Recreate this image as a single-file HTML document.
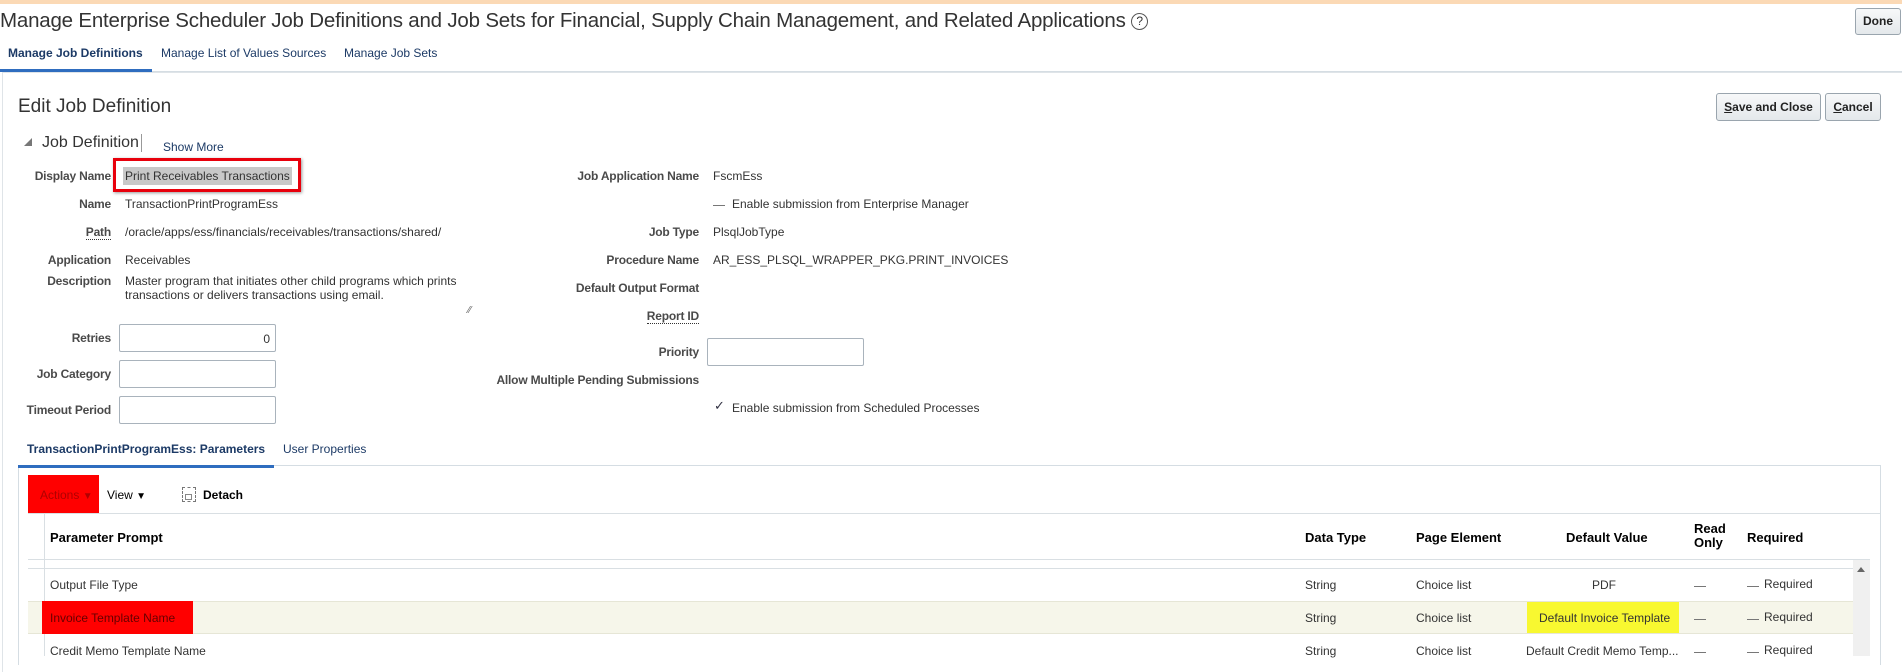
<!DOCTYPE html>
<html><head><meta charset="utf-8"><style>
*{margin:0;padding:0;box-sizing:border-box}
body{width:1902px;height:656px;overflow:hidden;background:#fff;font-family:"Liberation Sans",Arial,sans-serif;color:#333;font-size:12px;position:relative}
.a{position:absolute;white-space:nowrap}
.lbl{position:absolute;text-align:right;color:#4a4a4a;white-space:nowrap;font-weight:bold;letter-spacing:-0.2px}
.btn{position:absolute;border:1px solid #9aa5ae;border-radius:3px;background:linear-gradient(#f7f8f9,#e4e8eb);font-weight:bold;color:#222;font-size:12px;text-align:center}
.inp{position:absolute;border:1px solid #a9b3bc;border-radius:2px;background:#fff}
.hl{position:absolute;height:1px;background:#d9dfe3}
.b{font-weight:bold;color:#000}
</style></head><body>
<div class="a" style="left:0;top:0;width:1902px;height:4px;background:#fbd9b5"></div>
<div class="a" style="left:0;top:9px;font-size:20.5px;color:#333;letter-spacing:-0.2px">Manage Enterprise Scheduler Job Definitions and Job Sets for Financial, Supply Chain Management, and Related Applications <span style="display:inline-block;width:17px;height:17px;border:1.5px solid #555;border-radius:50%;font-size:12px;line-height:14px;text-align:center;vertical-align:2px">?</span></div>
<div class="btn" style="left:1855px;top:8px;width:46px;height:27px;line-height:25px">Done</div>
<div class="a b" style="left:8px;top:46px;font-size:12px;color:#1c3a66">Manage Job Definitions</div>
<div class="a" style="left:161px;top:46px;font-size:12px;color:#1c3a66">Manage List of Values Sources</div>
<div class="a" style="left:344px;top:46px;font-size:12px;color:#1c3a66">Manage Job Sets</div>
<div class="hl" style="left:0;top:71px;width:1902px;height:1px;background:#d5dde3"></div>
<div class="a" style="left:0;top:69px;width:152px;height:3px;background:#2f6dbf"></div>
<div class="a" style="left:2px;top:72px;width:1902px;height:600px;border:1px solid #dfe4e8;border-bottom:none"></div>
<div class="a" style="left:18px;top:96px;font-size:19px;color:#333">Edit Job Definition</div>
<div class="btn" style="left:1716px;top:93px;width:105px;height:28px;line-height:26px"><u>S</u>ave and Close</div>
<div class="btn" style="left:1825px;top:93px;width:56px;height:28px;line-height:26px"><u>C</u>ancel</div>
<div class="a" style="left:24px;top:138px;width:0;height:0;border-left:8px solid transparent;border-bottom:8px solid #777"></div>
<div class="a" style="left:42px;top:134px;font-size:16px;color:#333">Job Definition</div>
<div class="a" style="left:141px;top:134px;width:1px;height:18px;background:#999"></div>
<div class="a" style="left:163px;top:140px;font-size:12px;color:#1c3a66">Show More</div>

<div class="lbl" style="right:1791px;top:169px">Display Name</div>
<div class="a" style="left:113px;top:158px;width:188px;height:34px;border:3px solid #e8000c;box-shadow:1px 1px 3px #999"></div>
<div class="a" style="left:123px;top:167px;height:18px;background:#c8c8c8;padding:2px 2px;line-height:14px">Print Receivables Transactions</div>
<div class="lbl" style="right:1791px;top:197px">Name</div>
<div class="a" style="left:125px;top:197px">TransactionPrintProgramEss</div>
<div class="lbl" style="right:1791px;top:225px;border-bottom:1px dotted #333">Path</div>
<div class="a" style="left:125px;top:225px">/oracle/apps/ess/financials/receivables/transactions/shared/</div>
<div class="lbl" style="right:1791px;top:253px">Application</div>
<div class="a" style="left:125px;top:253px">Receivables</div>
<div class="lbl" style="right:1791px;top:274px">Description</div>
<div class="a" style="left:125px;top:274px;line-height:14px">Master program that initiates other child programs which prints<br>transactions or delivers transactions using email.</div>
<div class="a" style="left:468px;top:305px;font-size:10px;color:#666">⁄⁄</div>
<div class="lbl" style="right:1791px;top:331px">Retries</div>
<div class="inp" style="left:119px;top:324px;width:157px;height:28px"><span style="position:absolute;right:5px;top:7px">0</span></div>
<div class="lbl" style="right:1791px;top:367px">Job Category</div>
<div class="inp" style="left:119px;top:360px;width:157px;height:28px"></div>
<div class="lbl" style="right:1791px;top:403px">Timeout Period</div>
<div class="inp" style="left:119px;top:396px;width:157px;height:28px"></div>

<div class="lbl" style="right:1203px;top:169px">Job Application Name</div>
<div class="a" style="left:713px;top:169px">FscmEss</div>
<div class="a" style="left:713px;top:205px;width:12px;height:1px;background:#777"></div>
<div class="a" style="left:732px;top:197px">Enable submission from Enterprise Manager</div>
<div class="lbl" style="right:1203px;top:225px">Job Type</div>
<div class="a" style="left:713px;top:225px">PlsqlJobType</div>
<div class="lbl" style="right:1203px;top:253px">Procedure Name</div>
<div class="a" style="left:713px;top:253px">AR_ESS_PLSQL_WRAPPER_PKG.PRINT_INVOICES</div>
<div class="lbl" style="right:1203px;top:281px">Default Output Format</div>
<div class="lbl" style="right:1203px;top:309px;border-bottom:1px dotted #333">Report ID</div>
<div class="lbl" style="right:1203px;top:345px">Priority</div>
<div class="inp" style="left:707px;top:338px;width:157px;height:28px"></div>
<div class="lbl" style="right:1203px;top:373px">Allow Multiple Pending Submissions</div>
<div class="a" style="left:714px;top:398px;color:#334;font-size:13px">✓</div>
<div class="a" style="left:732px;top:401px">Enable submission from Scheduled Processes</div>

<div class="a b" style="left:27px;top:442px;color:#1c3a66">TransactionPrintProgramEss: Parameters</div>
<div class="a" style="left:283px;top:442px;color:#1c3a66">User Properties</div>
<div class="a" style="left:18px;top:465px;width:1863px;height:200px;border:1px solid #d5dde3;border-bottom:none"></div>
<div class="a" style="left:18px;top:465px;width:256px;height:3px;background:#2f6dbf"></div>
<div class="a" style="left:28px;top:475px;width:71px;height:39px;background:#ff0000"></div>
<div class="a" style="left:40px;top:488px;color:#b00000">Actions <span style="font-size:10px">▼</span></div>
<div class="a" style="left:107px;top:488px;color:#000">View <span style="font-size:10px">▼</span></div>
<div class="a" style="left:182px;top:487px;width:14px;height:15px;border:1px dashed #777"></div>
<div class="a" style="left:185px;top:494px;width:7px;height:6px;border:1px solid #888"></div>
<div class="a" style="left:203px;top:488px;color:#000;font-weight:bold">Detach</div>
<div class="hl" style="left:28px;top:513px;width:1852px"></div>
<div class="a" style="left:44px;top:513px;width:1px;height:143px;background:#d9dfe3"></div>
<div class="a b" style="left:50px;top:530px;font-size:13px">Parameter Prompt</div>
<div class="a b" style="left:1305px;top:530px;font-size:13px">Data Type</div>
<div class="a b" style="left:1416px;top:530px;font-size:13px">Page Element</div>
<div class="a b" style="left:1566px;top:530px;font-size:13px">Default Value</div>
<div class="a b" style="left:1694px;top:522px;font-size:13px;line-height:14px">Read<br>Only</div>
<div class="a b" style="left:1747px;top:530px;font-size:13px">Required</div>
<div class="hl" style="left:28px;top:559px;width:1842px"></div>
<div class="hl" style="left:28px;top:568px;width:1825px"></div>
<div class="a" style="left:1853px;top:560px;width:17px;height:96px;background:#f0f0f0"></div>
<div class="a" style="left:1857px;top:567px;width:0;height:0;border-left:4px solid transparent;border-right:4px solid transparent;border-bottom:5px solid #666"></div>
<div class="a" style="left:50px;top:578px">Output File Type</div>
<div class="a" style="left:1305px;top:578px">String</div>
<div class="a" style="left:1416px;top:578px">Choice list</div>
<div class="a" style="left:1592px;top:578px">PDF</div>
<div class="a" style="left:1694px;top:586px;width:12px;height:1px;background:#777"></div>
<div class="a" style="left:1747px;top:586px;width:12px;height:1px;background:#777"></div>
<div class="a" style="left:1764px;top:577px">Required</div>
<div class="a" style="left:28px;top:601px;width:1825px;height:33px;background:#f6f6ea;border-top:1px solid #e6e6d6;border-bottom:1px solid #e6e6d6"></div>
<div class="a" style="left:42px;top:601px;width:151px;height:33px;background:#ff0000"></div>
<div class="a" style="left:50px;top:611px;color:#600">Invoice Template Name</div>
<div class="a" style="left:1305px;top:611px">String</div>
<div class="a" style="left:1416px;top:611px">Choice list</div>
<div class="a" style="left:1527px;top:602px;width:152px;height:31px;background:#f8f830"></div>
<div class="a" style="left:1539px;top:611px">Default Invoice Template</div>
<div class="a" style="left:1694px;top:619px;width:12px;height:1px;background:#777"></div>
<div class="a" style="left:1747px;top:619px;width:12px;height:1px;background:#777"></div>
<div class="a" style="left:1764px;top:610px">Required</div>
<div class="a" style="left:50px;top:644px">Credit Memo Template Name</div>
<div class="a" style="left:1305px;top:644px">String</div>
<div class="a" style="left:1416px;top:644px">Choice list</div>
<div class="a" style="left:1526px;top:644px">Default Credit Memo Temp...</div>
<div class="a" style="left:1694px;top:652px;width:12px;height:1px;background:#777"></div>
<div class="a" style="left:1747px;top:652px;width:12px;height:1px;background:#777"></div>
<div class="a" style="left:1764px;top:643px">Required</div>
</body></html>
